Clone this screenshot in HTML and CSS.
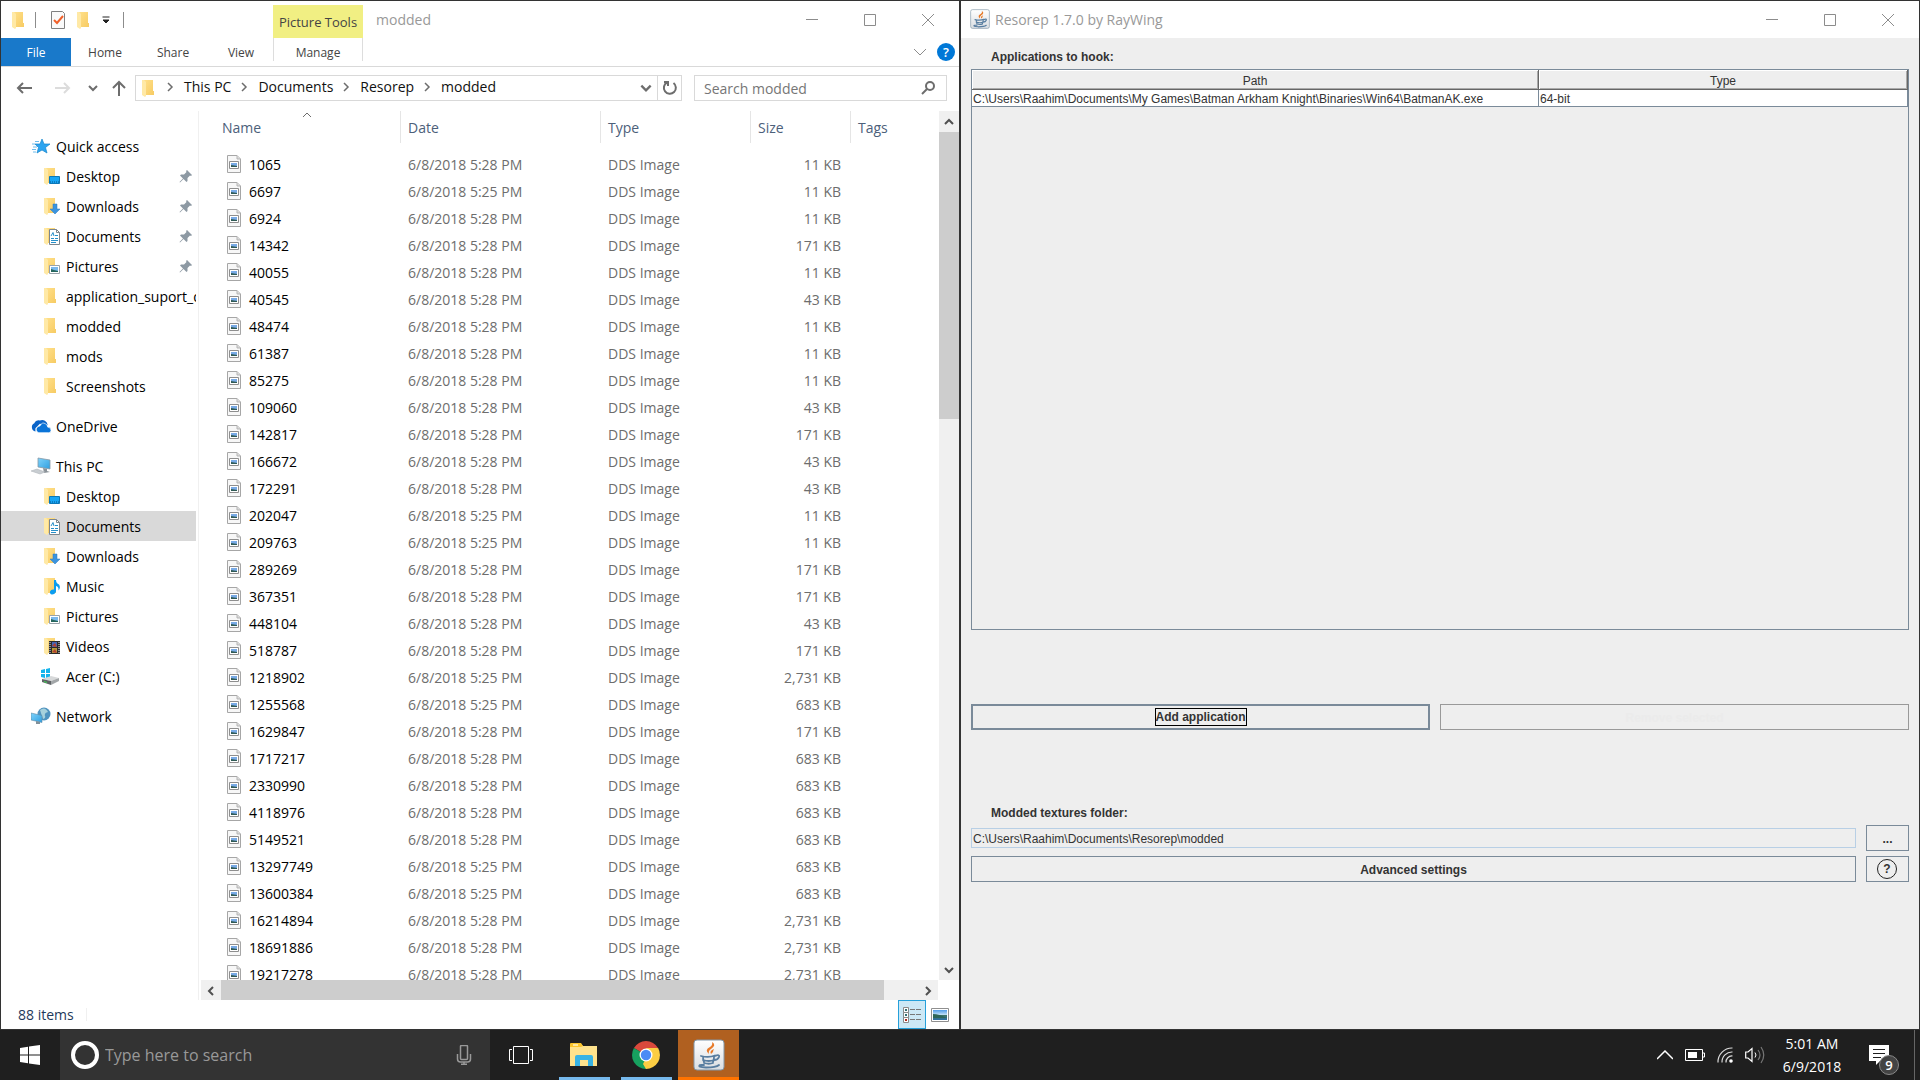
FILE: index.html
```html
<!DOCTYPE html>
<html lang="en">
<head>
  <meta charset="UTF-8" />
  <title>modded</title>
  <link rel="stylesheet" href="styles.css">
</head>
<body>
  <!-- Shared icon shapes -->
  <svg class="sprite" aria-hidden="true">
    <defs>
      <linearGradient id="gold" x1="0" x2="1" y1="0" y2="1">
        <stop offset="0" stop-color="#ffe08a" /><stop offset="1" stop-color="#f7cb63" />
      </linearGradient>
      <linearGradient id="screen" x1="0" x2="1" y1="0" y2="1">
        <stop offset="0" stop-color="#7fd3fb" /><stop offset="1" stop-color="#2f9fe0" />
      </linearGradient>
      <linearGradient id="tile" x1="0" x2="0" y1="0" y2="1">
        <stop offset="0" stop-color="#ffffff" /><stop offset="1" stop-color="#d9dde1" />
      </linearGradient>
      <linearGradient id="photo" x1="0" x2="0" y1="0" y2="1">
        <stop offset="0" stop-color="#4f9be8" /><stop offset=".5" stop-color="#c8e4f8" />
        <stop offset=".55" stop-color="#3f7468" /><stop offset="1" stop-color="#2e6fa8" />
      </linearGradient>
    </defs>
    <symbol id="folder" viewBox="0 0 16 18">
      <path d="M3 1h9v11h1v4H3z" fill="url(#gold)" />
      <path d="M1 1h2l2 2v14l-1 1-3-2z" fill="#ffe9a6" />
    </symbol>
    <symbol id="file" viewBox="0 0 14 18">
      <path d="M.5.5h9.500l3.500 3.500v13.500H.5z" fill="#f7f7f7" stroke="#a6a6a6" />
      <path d="M10 .5V4h3.500" fill="#dcdcdc" stroke="#b5b5b5" />
      <path d="M2.500 6.500h9v7h-9z" fill="#fff" stroke="#8e8e8e" />
      <path d="M4 8h6v4H4z" fill="#78aae6" /><path d="M4 10l3 .5 3 .5v1H4z" fill="#2f5a55" />
    </symbol>
    <symbol id="desktop" viewBox="0 0 18 18">
      <use href="#folder" width="16" height="18" />
      <path d="M6.500 9.500h10v7h-10z" fill="#16a5f5" stroke="#0c78b8" />
      <path d="M7 15h10" stroke="#075488" stroke-dasharray="1 1" />
    </symbol>
    <symbol id="downloads" viewBox="0 0 18 18">
      <use href="#folder" width="16" height="18" />
      <path d="M10 7h4v5h3l-5 5-5-5h3z" fill="#3b94de" stroke="#2b7bc0" stroke-width=".5" />
    </symbol>
    <symbol id="documents" viewBox="0 0 18 18">
      <use href="#folder" width="16" height="18" />
      <path d="M6.500 2.500h7l3 3v12h-10z" fill="#fff" stroke="#7d868c" />
      <path d="M13.500 2.500v3h3" fill="none" stroke="#7d868c" />
      <path d="M8 9l2-3.500L11 9M12 8.500h3M8 11.500h3M12 11.500h3M8 13.500h7M8 15.500h5" fill="none" stroke="#2790c9" />
    </symbol>
    <symbol id="pictures" viewBox="0 0 18 18">
      <use href="#folder" width="16" height="18" />
      <path d="M6.500 8.500h10v8h-10z" fill="#fff" stroke="#98a2a9" />
      <path d="M8 10h7v5H8z" fill="#79b8ed" /><path d="M8 12l3 1 4 1v1H8z" fill="#24665c" />
    </symbol>
    <symbol id="music" viewBox="0 0 18 18">
      <use href="#folder" width="16" height="18" />
      <path d="M11 3h2q0 3 3 4.500 2 3-.5 6 .5-4-2.500-4.500v5.500q-1 3-4 3-2.500-.5-2-3 1-2.500 4-2z" fill="#0b9df0" />
    </symbol>
    <symbol id="videos" viewBox="0 0 18 18">
      <use href="#folder" width="16" height="18" />
      <path d="M6 4h11v13H6z" fill="#2c2c2c" />
      <path d="M7 5v12M16 5v12" stroke="#eee" stroke-dasharray="1 1" />
      <path d="M9 5h5v5H9z" fill="#4666b4" /><path d="M9 11h5v5H9z" fill="#b79b39" />
      <path d="M9 9l3-3 2 4zM9 15l3-3 2 4z" fill="#b44030" />
    </symbol>
    <symbol id="quick" viewBox="0 0 18 18">
      <path d="M10 2l2 5h6l-4.500 3.500L15 16l-5-3-5 3 1.500-5.500L3 7h5z" fill="#2ba4f0" stroke="#1685cc" stroke-width=".7" />
      <path d="M3 4.500h4M0 7h3M1 10h4M0 12.500h4M1 15h3" stroke="#6dbcec" />
    </symbol>
    <symbol id="cloud" viewBox="0 0 18 14">
      <path d="M4 12a4 4 0 0 1-1-7.500A4 4 0 0 1 8 2a5 5 0 0 1 7 4l-7-1-4 4z" fill="#0a64c8" />
      <path d="M7 13q-3-1-2-4 1-2 3-2 2-4 5-2 2 1 2 3 3 0 3 3 0 2-2 2z" fill="#0a74d8" stroke="#fff" stroke-width=".6" />
    </symbol>
    <symbol id="pc" viewBox="0 0 20 18">
      <path d="M7 1l12 2v9L7 10z" fill="url(#screen)" stroke="#8698a4" stroke-width=".8" />
      <path d="M12 11l4 1v2l3 1-6 1z" fill="#8a9298" />
      <path d="M0 14l6-2 8 3-5 2z" fill="#c8cdd1" stroke="#a9afb4" stroke-width=".5" />
    </symbol>
    <symbol id="drive" viewBox="0 0 20 18">
      <path d="M1 3l4-1v4H1zM6 2l4-1v5H6zM1 7h4v4L1 10zM6 7h4v4H6z" fill="#14b4ec" />
      <path d="M2 12l9-3 8 2-8 3z" fill="#d7d9da" /><path d="M2 12l9 2v4l-9-3z" fill="#5f6366" />
      <path d="M11 14l8-3v3l-8 4z" fill="#a2a6a8" /><path d="M4 14.500l3 1" stroke="#39d850" />
    </symbol>
    <symbol id="network" viewBox="0 0 20 18">
      <circle cx="13" cy="7" r="6.500" fill="#4f93bf" /><path d="M9 3q5-4 8 2-4 1-3 4 1 2-2 3z" fill="#a6d1dc" />
      <path d="M0 6l11 2.500v7L0 13z" fill="url(#screen)" stroke="#608ca6" stroke-width=".6" />
      <path d="M5 14l4 1v2H5z" fill="#81909a" />
    </symbol>
    <symbol id="pin" viewBox="0 0 14 14">
      <path d="M8 1l5 5-1 1-1-.5L8.500 9v3l-1 1-3-3L1 13.500.5 13 4 9.500l-3-3 1-1h3L7.500 3 7 2z" fill="#8d99a3" />
    </symbol>
    <symbol id="java" viewBox="0 0 32 32">
      <rect x="1" y="1" width="30" height="30" rx="3" fill="url(#tile)" stroke="#8297a9" />
      <path d="M16 15q-5-4 1-7 3-2 2-5 5 3-1 7-3 2-2 5zM18 15q-2-3 3-5-1 2-1 3-1 1-2 2z" fill="#e77a2a" />
      <path d="M8 17q8 2 14-.5M22 17q5-2 4 1-1 3-5 3M10 21q6 2 11 0M10 18q0 3 1 5M21 18q0 3-1 5M11 24q5 1.500 9 0M7 26q-3 2 6 2.500 10 0 13-2.500M8 26h3" fill="none" stroke="#587da0" stroke-width="1.800" stroke-linecap="round" />
    </symbol>
    <symbol id="chevron" viewBox="0 0 12 12"><path d="M4 2l4 4-4 4" fill="none" stroke="currentColor" stroke-width="1.500" /></symbol>
    <symbol id="arrow-up" viewBox="0 0 12 12"><path d="M2 8l4-4 4 4" fill="none" stroke="currentColor" stroke-width="2" /></symbol>
    <symbol id="arrow-down" viewBox="0 0 12 12"><path d="M2 4l4 4 4-4" fill="none" stroke="currentColor" stroke-width="2" /></symbol>
    <symbol id="arrow-left" viewBox="0 0 12 12"><path d="M8 2L4 6l4 4" fill="none" stroke="currentColor" stroke-width="2" /></symbol>
    <symbol id="arrow-right" viewBox="0 0 12 12"><path d="M4 2l4 4-4 4" fill="none" stroke="currentColor" stroke-width="2" /></symbol>
    <symbol id="win-min" viewBox="0 0 12 12"><path d="M0 5.500h12" stroke="#8c8c8c" /></symbol>
    <symbol id="win-max" viewBox="0 0 12 12"><path d="M.5.5h11v11H.5z" fill="none" stroke="#8c8c8c" /></symbol>
    <symbol id="win-close" viewBox="0 0 12 12"><path d="M0 0l12 12M12 0L0 12" stroke="#8c8c8c" /></symbol>
  </svg>

  <main class="windows">
    <!-- File explorer -->
    <section class="window explorer">
      <header class="titlebar">
        <div class="quick-bar">
          <svg class="icon"><use href="#folder" /></svg>
          <span class="divider"></span>
          <button class="plain" aria-label="Properties">
            <svg width="16" height="18" viewBox="0 0 16 18">
              <path d="M1.500.5h11l2 2v15h-13z" fill="#fafafa" stroke="#808080" />
              <path d="M4 9l3 3 6-7" fill="none" stroke="#f0602a" stroke-width="2" />
            </svg>
          </button>
          <button class="plain" aria-label="New folder"><svg class="icon"><use href="#folder" /></svg></button>
          <button class="plain" aria-label="Customize">
            <svg width="8" height="8" viewBox="0 0 8 8"><path d="M.5 1h7M1 4h6L4 7z" fill="#222" stroke="#222" /></svg>
          </button>
          <span class="divider"></span>
        </div>
        <span class="context-tab">Picture Tools</span>
        <span class="caption">modded</span>
        <div class="controls">
          <button aria-label="Minimize"><svg><use href="#win-min" /></svg></button>
          <button aria-label="Maximize"><svg><use href="#win-max" /></svg></button>
          <button aria-label="Close"><svg><use href="#win-close" /></svg></button>
        </div>
      </header>

      <nav class="ribbon">
        <button class="tab file-tab">File</button>
        <button class="tab">Home</button>
        <button class="tab">Share</button>
        <button class="tab">View</button>
        <button class="tab manage-tab">Manage</button>
        <button class="plain expand" aria-label="Expand ribbon">
          <svg width="14" height="8" viewBox="0 0 14 8"><path d="M1 1l6 6 6-6" fill="none" stroke="#8c8c8c" /></svg>
        </button>
        <button class="plain help" aria-label="Help">?</button>
      </nav>

      <div class="address-row">
        <button class="plain" aria-label="Back"><svg width="16" height="14" viewBox="0 0 16 14"><path d="M16 7H2M7 2L2 7l5 5" fill="none" stroke="#6d6d6d" stroke-width="2" /></svg></button>
        <button class="plain forward" aria-label="Forward"><svg width="16" height="14" viewBox="0 0 16 14"><path d="M0 7h14M9 2l5 5-5 5" fill="none" stroke="#dcdcdc" stroke-width="2" /></svg></button>
        <button class="plain recent" aria-label="Recent locations"><svg width="12" height="12"><use href="#arrow-down" /></svg></button>
        <button class="plain" aria-label="Up"><svg width="14" height="16" viewBox="0 0 14 16"><path d="M7 16V2M1 8l6-6 6 6" fill="none" stroke="#6d6d6d" stroke-width="2" /></svg></button>
        <div class="address">
          <svg class="icon"><use href="#folder" /></svg>
          <svg class="sep"><use href="#chevron" /></svg><a href="#">This PC</a>
          <svg class="sep"><use href="#chevron" /></svg><a href="#">Documents</a>
          <svg class="sep"><use href="#chevron" /></svg><a href="#">Resorep</a>
          <svg class="sep"><use href="#chevron" /></svg><a href="#">modded</a>
          <button class="plain drop" aria-label="Previous locations"><svg width="14" height="14"><use href="#arrow-down" /></svg></button>
          <button class="plain refresh" aria-label="Refresh">
            <svg width="16" height="16" viewBox="0 0 16 16"><path d="M5 2.500A6 6 0 1 0 11.500 3M2 2h4v4" fill="none" stroke="#6d6d6d" stroke-width="2" /></svg>
          </button>
        </div>
        <label class="search">
          <input type="text" placeholder="Search modded" aria-label="Search modded">
          <svg width="14" height="14" viewBox="0 0 14 14"><circle cx="9" cy="5" r="4" fill="none" stroke="#6d6d6d" stroke-width="2" /><path d="M6 8l-5 5" stroke="#6d6d6d" stroke-width="2" /></svg>
        </label>
      </div>

      <div class="content">
        <aside class="sidebar" id="sidebar"></aside>
        <div class="list-area">
          <div class="list-main">
            <div class="list">
              <table class="files">
                <colgroup><col class="c-name"><col class="c-date"><col class="c-type"><col class="c-size"><col></colgroup>
                <thead>
                  <tr>
                    <th>Name<svg class="sort" width="10" height="6" viewBox="0 0 10 6"><path d="M1 5l4-4 4 4" fill="none" stroke="#6d6d6d" /></svg></th>
                    <th>Date</th><th>Type</th><th>Size</th><th>Tags</th>
                  </tr>
                </thead>
                <tbody id="rows"></tbody>
              </table>
            </div>
            <div class="vscroll">
              <button aria-label="Scroll up"><svg><use href="#arrow-up" /></svg></button>
              <span class="thumb"></span>
              <button aria-label="Scroll down"><svg><use href="#arrow-down" /></svg></button>
            </div>
          </div>
          <div class="hscroll">
            <button aria-label="Scroll left"><svg><use href="#arrow-left" /></svg></button>
            <span class="thumb"></span>
            <button aria-label="Scroll right"><svg><use href="#arrow-right" /></svg></button>
          </div>
        </div>
      </div>

      <footer class="status">
        <span>88 items</span><i></i>
        <button class="view-btn active" aria-label="Details view">
          <svg width="18" height="16" viewBox="0 0 18 16">
            <path d="M.5.5h5v5h-5zM.5 5.500h5v5h-5zM.5 10.500h5v5h-5z" fill="#fff" stroke="#8a8a8a" />
            <path d="M2 3h2M2 8h2" stroke="#356f75" stroke-width="2" /><path d="M2 13h2" stroke="#b02a20" stroke-width="2" />
            <path d="M7 2.500h5M13 2.500h5M7 7.500h5M13 7.500h5M7 12.500h5M13 12.500h5" stroke="#777" />
          </svg>
        </button>
        <button class="view-btn" aria-label="Large icons view">
          <svg width="18" height="14" viewBox="0 0 18 14"><path d="M.5.5h17v13H.5z" fill="#fff" stroke="#8f8f8f" /><path d="M2 2h14v10H2z" fill="url(#photo)" /><path d="M2 6q6 0 14 4H2z" fill="#2f6659" /></svg>
        </button>
      </footer>
    </section>

    <!-- Resorep -->
    <section class="window resorep">
      <header class="titlebar">
        <svg class="app-icon" width="20" height="20"><use href="#java" /></svg>
        <span class="caption">Resorep 1.7.0 by RayWing</span>
        <div class="controls">
          <button aria-label="Minimize"><svg><use href="#win-min" /></svg></button>
          <button aria-label="Maximize"><svg><use href="#win-max" /></svg></button>
          <button aria-label="Close"><svg><use href="#win-close" /></svg></button>
        </div>
      </header>
      <div class="panel">
        <h2>Applications to hook:</h2>
        <div class="apps">
          <table>
            <colgroup><col class="c-path"><col></colgroup>
            <thead><tr><th>Path</th><th>Type</th></tr></thead>
            <tbody>
              <tr><td>C:\Users\Raahim\Documents\My Games\Batman Arkham Knight\Binaries\Win64\BatmanAK.exe</td><td>64-bit</td></tr>
            </tbody>
          </table>
        </div>
        <div class="actions">
          <button class="btn focused"><span>Add application</span></button>
          <button class="btn" disabled>Remove selected</button>
        </div>
        <label class="folder-label" for="folder-path">Modded textures folder:</label>
        <div class="folder-grid">
          <input id="folder-path" type="text" value="C:\Users\Raahim\Documents\Resorep\modded" readonly>
          <button class="btn">...</button>
          <button class="btn">Advanced settings</button>
          <button class="btn" aria-label="About"><span class="round">?</span></button>
        </div>
      </div>
    </section>
  </main>

  <footer class="taskbar">
    <button class="start" aria-label="Start">
      <svg width="20" height="20" viewBox="0 0 20 20"><path d="M0 3l8-1.200V9.500H0zM9 1.600L20 0v9.500H9zM0 10.500h8v7.700L0 17zM9 10.500h11V20L9 18.400z" fill="#fff" /></svg>
    </button>
    <label class="cortana">
      <span class="ring"></span>
      <input type="text" placeholder="Type here to search" aria-label="Type here to search">
      <svg width="16" height="20" viewBox="0 0 16 20"><rect x="4.500" y=".5" width="7" height="14" rx="1" fill="none" stroke="#999" stroke-width="1.500" /><path d="M1.500 9v5q0 3 3 3h7q3 0 3-3V9M8 17v2.500M5 19.300h6" fill="none" stroke="#999" stroke-width="1.500" /></svg>
    </label>
    <button class="task view" aria-label="Task view">
      <svg width="24" height="18" viewBox="0 0 24 18"><path d="M4.500.5h15v17h-15zM3 3.500H.5v11H3M21 3.500h2.500v11H21" fill="none" stroke="#fff" /></svg>
    </button>
    <button class="task open" aria-label="File Explorer">
      <svg width="28" height="24" viewBox="0 0 28 24"><path d="M0 1h11l2 2h14v20H0z" fill="#fee28c" /><path d="M0 1q0-1 1-1h10l2 3-2 1H0z" fill="#fbc52c" /><path d="M3 2h5" stroke="#fff2c5" stroke-width="1.500" /><path d="M5 23V14q0-2 2-2h14q2 0 2 2v9h-5v-6h-8v6z" fill="#38b3e4" /></svg>
    </button>
    <button class="task open" aria-label="Chrome">
      <svg width="28" height="28" viewBox="0 0 28 28">
        <path d="M14 14L1.900 7A14 14 0 0 1 26.100 7z" fill="#d9493c" />
        <path d="M14 14L26.100 7A14 14 0 0 1 14 28z" fill="#fccd43" />
        <path d="M14 14v14A14 14 0 0 1 1.900 7z" fill="#17a15f" />
        <path d="M14 7h12.100L20 17.500z" fill="#fccd43" /><path d="M20 17.500L14 28l-3-5 3-6z" fill="#fccd43" />
        <circle cx="14" cy="14" r="6.500" fill="#fff" /><circle cx="14" cy="14" r="5.200" fill="#4c8bf5" />
      </svg>
    </button>
    <button class="task current" aria-label="Resorep"><svg width="32" height="32"><use href="#java" /></svg></button>
    <div class="tray">
      <svg width="16" height="10" viewBox="0 0 16 10"><path d="M0 9l8-8 8 8" fill="none" stroke="#fff" stroke-width="1.500" /></svg>
      <svg width="20" height="12" viewBox="0 0 20 12"><path d="M.5.5h17v11H.5zM18 4h1.500v4H18" fill="none" stroke="#fff" /><path d="M3 3h9v6H3z" fill="#fff" /></svg>
      <svg width="16" height="16" viewBox="0 0 16 16"><circle cx="14" cy="14" r="1.800" fill="#fff" /><path d="M9 15.500A6 6 0 0 1 15.500 9M5 15.500A10 10 0 0 1 15.500 5M1 15.500A14 14 0 0 1 15.500 1" fill="none" stroke="#ddd" stroke-width="1.200" /></svg>
      <svg width="20" height="18" viewBox="0 0 20 18"><path d="M.7 6v6H3l4 3.500v-13L3 6z" fill="none" stroke="#fff" stroke-width="1.200" /><path d="M10 6.500q2 2.500 0 5" fill="none" stroke="#fff" /><path d="M13 4q4 5 0 10M16 1q5.500 8 0 16" fill="none" stroke="#777" stroke-width="1.200" /></svg>
      <div class="clock"><span>5:01 AM</span><span>6/9/2018</span></div>
      <button class="notify" aria-label="Notifications">
        <svg width="20" height="20" viewBox="0 0 20 20"><path d="M0 0h20v16h-9l-4 4v-4H0z" fill="#fff" /><path d="M4 4.500h12M4 8.500h12M4 12.500h8" stroke="#1f1f1f" /></svg>
        <span class="badge">9</span>
      </button>
    </div>
    <span class="peek"></span>
  </footer>

  <script>
    // [name, minute, size in KB]
    const files = [
      ['1065', 28, '11'], ['6697', 25, '11'], ['6924', 28, '11'], ['14342', 28, '171'],
      ['40055', 28, '11'], ['40545', 28, '43'], ['48474', 28, '11'], ['61387', 28, '11'],
      ['85275', 28, '11'], ['109060', 28, '43'], ['142817', 28, '171'], ['166672', 28, '43'],
      ['172291', 28, '43'], ['202047', 25, '11'], ['209763', 25, '11'], ['289269', 28, '171'],
      ['367351', 28, '171'], ['448104', 28, '43'], ['518787', 28, '171'], ['1218902', 25, '2,731'],
      ['1255568', 25, '683'], ['1629847', 28, '171'], ['1717217', 28, '683'], ['2330990', 28, '683'],
      ['4118976', 28, '683'], ['5149521', 28, '683'], ['13297749', 25, '683'], ['13600384', 25, '683'],
      ['16214894', 28, '2,731'], ['18691886', 28, '2,731'], ['19217278', 28, '2,731']
    ];

    document.getElementById('rows').innerHTML = files.map(([name, minute, size]) => `
      <tr>
        <td class="name"><svg class="file-icon"><use href="#file" /></svg>${name}</td>
        <td>6/8/2018 5:${minute} PM</td>
        <td>DDS Image</td>
        <td class="size">${size} KB</td>
        <td></td>
      </tr>`).join('');

    // Each group starts with its root entry: [label, icon, extra class]
    const groups = [
      [['Quick access', 'quick', 'root'], ['Desktop', 'desktop', 'pinned'], ['Downloads', 'downloads', 'pinned'],
       ['Documents', 'documents', 'pinned'], ['Pictures', 'pictures', 'pinned'],
       ['application_suport_d', 'folder', 'plain-folder'], ['modded', 'folder', 'plain-folder'],
       ['mods', 'folder', 'plain-folder'], ['Screenshots', 'folder', 'plain-folder']],
      [['OneDrive', 'cloud', 'root']],
      [['This PC', 'pc', 'root'], ['Desktop', 'desktop', ''], ['Documents', 'documents', 'selected'],
       ['Downloads', 'downloads', ''], ['Music', 'music', ''], ['Pictures', 'pictures', ''],
       ['Videos', 'videos', ''], ['Acer (C:)', 'drive', 'wide']],
      [['Network', 'network', 'root']]
    ];

    document.getElementById('sidebar').innerHTML = groups.map(items => `<ul>${items.map(([label, icon, cls]) => `
      <li><a href="#" class="${cls}">
        <svg class="side-icon"><use href="#${icon}" /></svg><span>${label}</span>
        ${cls === 'pinned' ? '<svg class="pin"><use href="#pin" /></svg>' : ''}
      </a></li>`).join('')}</ul>`).join('');
  </script>
</body>
</html>
```

FILE: styles.css
```css
* {
  margin: 0;
  padding: 0;
  box-sizing: border-box;
}

body {
  height: 100vh;
  display: flex;
  flex-direction: column;
  font-family: "Open Sans", "Noto Sans", sans-serif;
  font-size: 14px;
  color: #000;
  background: #1f1f1f;
  overflow: hidden;
}

button, input {
  font: inherit;
  color: inherit;
  background: none;
  border: 0;
  outline: none;
}

a {
  color: inherit;
  text-decoration: none;
}

svg {
  display: block;
  flex: none;
}

.sprite {
  position: absolute;
  width: 0;
  height: 0;
}

.plain {
  display: flex;
  align-items: center;
  justify-content: center;
}

.icon {
  width: 16px;
  height: 18px;
}

/* Windows */
.windows {
  flex: 1;
  min-height: 0;
  display: grid;
  grid-template-columns: 1fr 1fr;
}

.window {
  min-width: 0;
  min-height: 0;
  display: flex;
  flex-direction: column;
  background: #fff;
  border: 1px solid #333;
}

.titlebar {
  height: 37px;
  flex: none;
  display: flex;
  align-items: center;
}

.caption {
  color: #999;
  font-size: 14px;
  line-height: 36px;
}

.controls {
  display: flex;
  margin: 0 2px 0 auto;
}

.controls button {
  width: 58px;
  height: 36px;
  display: flex;
  align-items: center;
  justify-content: center;
}

.controls svg {
  width: 12px;
  height: 12px;
}

.quick-bar {
  width: 272px;
  padding-left: 10px;
  display: flex;
  align-items: center;
}

.quick-bar .divider {
  width: 1px;
  height: 16px;
  margin: 0 14px 0 8px;
  background: #8c8c8c;
}

.quick-bar .plain {
  margin-right: 10px;
}

.quick-bar .plain + .divider {
  margin-left: 3px;
}

.context-tab {
  width: 90px;
  align-self: flex-end;
  margin-right: 13px;
  background: #f1ef83;
  color: #444;
  font-size: 13px;
  line-height: 34px;
  height: 33px;
  text-align: center;
}

/* Ribbon tabs */
.ribbon {
  height: 29px;
  flex: none;
  display: flex;
  align-items: flex-start;
  border-bottom: 1px solid #d9d9d9;
}

.tab {
  width: 68px;
  height: 28px;
  font-size: 12px;
  color: #444;
}

.file-tab {
  width: 70px;
  background: #1979ca;
  color: #fff;
}

.manage-tab {
  width: 90px;
  height: 23px;
  padding-top: 5px;
  margin-left: -2px;
  border: solid #ddd;
  border-width: 0 1px;
}

.expand {
  height: 28px;
  margin: 0 10px 0 auto;
}

.help {
  width: 18px;
  height: 18px;
  margin: 5px 4px 0 0;
  border-radius: 50%;
  background: #0078d7;
  color: #fff;
  font-size: 13px;
  font-weight: 600;
}

/* Address bar */
.address-row {
  flex: none;
  display: flex;
  align-items: center;
  padding: 8px 12px 10px 15px;
  color: #6d6d6d;
}

.forward {
  margin-left: 23px;
}

.recent {
  margin: 0 13px 0 16px;
}

.address {
  flex: 1;
  height: 26px;
  margin-left: 9px;
  padding-left: 5px;
  display: flex;
  align-items: center;
  border: 1px solid #d9d9d9;
}

.address a {
  color: #111;
  line-height: 22px;
  padding-bottom: 2px;
}

.address .sep {
  width: 12px;
  height: 12px;
  margin: 0 8px 2px 7px;
}

.drop {
  margin: 0 4px 0 auto;
}

.refresh {
  width: 24px;
  height: 24px;
  border-left: 1px solid #d9d9d9;
}

.search {
  width: 253px;
  height: 26px;
  margin-left: 12px;
  padding: 0 11px 0 9px;
  display: flex;
  align-items: center;
  border: 1px solid #d9d9d9;
}

.search input {
  flex: 1;
  min-width: 0;
}

.search input::placeholder {
  color: #767676;
}

/* Navigation tree */
.content {
  flex: 1;
  min-height: 0;
  display: flex;
}

.sidebar {
  width: 198px;
  flex: none;
  padding: 20px 2px 0 0;
  border-right: 1px solid #f0f0f0;
  overflow: hidden;
}

.sidebar ul {
  list-style: none;
  margin-bottom: 10px;
}

.sidebar li a {
  height: 30px;
  padding-left: 42px;
  display: flex;
  align-items: center;
  overflow: hidden;
  white-space: nowrap;
}

.sidebar li a.root {
  padding-left: 30px;
}

.sidebar li a.wide {
  padding-left: 39px;
}

.sidebar li a.selected {
  background: #d9d9d9;
}

.side-icon {
  width: 18px;
  height: 18px;
  margin-right: 5px;
}

.plain-folder .side-icon {
  width: 16px;
  margin-right: 7px;
}

.root .side-icon {
  width: 20px;
  margin-right: 5px;
}

.wide .side-icon {
  width: 20px;
  margin-right: 6px;
}

.pin {
  width: 14px;
  height: 14px;
  margin: 0 3px 0 auto;
}

/* File list */
.list-area {
  flex: 1;
  min-width: 0;
  display: flex;
  flex-direction: column;
  padding-left: 2px;
}

.list-main {
  flex: 1;
  min-height: 0;
  display: flex;
}

.list {
  flex: 1;
  min-width: 0;
  overflow: hidden;
}

.files {
  width: 100%;
  table-layout: fixed;
  border-collapse: separate;
  border-spacing: 0;
}

.c-name, .c-date {
  width: 200px;
}

.c-type {
  width: 150px;
}

.c-size {
  width: 100px;
}

.files th {
  position: relative;
  height: 32px;
  padding-left: 7px;
  border-right: 1px solid #e5e5e5;
  font-weight: 400;
  text-align: left;
  color: #4c607a;
}

.files th:first-child {
  padding-left: 21px;
}

.files th:last-child {
  border-right: 0;
}

/* Sort arrow hangs over the top edge of the header cell */
.sort {
  position: absolute;
  top: 1px;
  left: 101px;
}

.files tbody::before {
  content: "";
  display: block;
  height: 8px;
}

.files td {
  height: 27px;
  padding-left: 7px;
  color: #6d6d6d;
  white-space: nowrap;
}

.files td.name {
  display: flex;
  align-items: center;
  padding-left: 26px;
  color: #000;
}

.files td.size {
  padding-right: 10px;
  text-align: right;
}

.file-icon {
  width: 14px;
  height: 18px;
  margin: 0 8px 1px 0;
}

/* Scroll bars */
.vscroll, .hscroll {
  flex: none;
  display: flex;
  background: #f0f0f0;
  color: #505050;
}

.vscroll {
  width: 20px;
  flex-direction: column;
}

.vscroll .thumb {
  flex: 0 0 33%;
  margin-bottom: auto;
}

.hscroll {
  height: 20px;
  margin-right: 21px;
}

.hscroll .thumb {
  flex: 0 0 90%;
  margin-right: auto;
}

.thumb {
  background: #cdcdcd;
}

.vscroll button, .hscroll button {
  width: 20px;
  height: 21px;
  display: flex;
  align-items: center;
  justify-content: center;
}

.vscroll svg, .hscroll svg {
  width: 12px;
  height: 12px;
}

/* Status bar */
.status {
  height: 29px;
  flex: none;
  display: flex;
  align-items: center;
  padding: 0 5px 0 17px;
  color: #1e395b;
}

.status i {
  width: 1px;
  height: 13px;
  margin: 0 auto 0 12px;
  background: #f0f0f0;
}

.view-btn {
  width: 28px;
  height: 29px;
  display: flex;
  align-items: center;
  justify-content: center;
}

.view-btn.active {
  background: #cce8f6;
  border: 1px solid #26a0da;
}

/* Resorep */
.resorep {
  background: #eee;
  font-family: "Liberation Sans", Arial, sans-serif;
  font-size: 12px;
  color: #333;
}

.resorep .titlebar {
  background: #fff;
  font-family: "Open Sans", "Noto Sans", sans-serif;
}

.app-icon {
  margin: 0 5px 2px 9px;
}

.panel {
  flex: 1;
  min-height: 0;
  display: flex;
  flex-direction: column;
  padding: 11px 10px 147px;
}

.panel h2, .folder-label {
  margin-left: 20px;
  font-size: 12px;
  font-weight: 700;
  line-height: 16px;
}

.apps {
  flex: 1;
  min-height: 0;
  margin-top: 4px;
  border: 1px solid #7a8a99;
}

.apps table {
  width: 100%;
  table-layout: fixed;
  border-collapse: separate;
  border-spacing: 0;
}

.c-path {
  width: 567px;
}

.apps th {
  height: 20px;
  padding-top: 2px;
  font-weight: 400;
  border: solid #666;
  border-width: 0 1px 1px 0;
  box-shadow: inset 1px 1px #fff, inset -1px -1px #aaa;
}

.apps td {
  height: 17px;
  padding: 2px 0 0 1px;
  background: #fff;
  border: solid #7a8a99;
  border-width: 0 1px 1px 0;
  white-space: nowrap;
}

.actions {
  display: grid;
  grid-template-columns: 459fr 469fr;
  gap: 10px;
  margin: 74px 0 75px;
}

.btn {
  height: 26px;
  padding-top: 2px;
  border: 1px solid #7a8a99;
  font-weight: 700;
  display: flex;
  align-items: center;
  justify-content: center;
}

.btn.focused {
  padding: 0;
  border-width: 2px;
}

.btn.focused span {
  border: 1px solid #000;
  padding-top: 1px;
  line-height: 15px;
}

.btn:disabled {
  border-color: #999;
  color: #ebebeb;
}

.folder-grid {
  display: grid;
  grid-template-columns: 1fr 43px;
  gap: 5px 10px;
  align-items: center;
  margin-top: 4px;
}

.folder-grid input {
  height: 20px;
  min-width: 0;
  padding: 2px 0 0 1px;
  border: 1px solid #b8cfe5;
}

.round {
  width: 20px;
  height: 20px;
  margin: 0 1px 2px 0;
  border: 1px solid #222;
  border-radius: 50%;
  line-height: 18px;
  text-align: center;
}

/* Taskbar */
.taskbar {
  height: 50px;
  flex: none;
  display: flex;
  color: #fff;
}

.start {
  width: 60px;
  display: flex;
  align-items: center;
  justify-content: center;
}

.cortana {
  width: 430px;
  padding: 0 18px 0 11px;
  display: flex;
  align-items: center;
  background: #333;
}

.ring {
  width: 28px;
  height: 28px;
  margin-right: 6px;
  border: 4px solid #fff;
  border-radius: 50%;
}

.cortana input {
  flex: 1;
  min-width: 0;
  font-size: 16px;
}

.cortana input::placeholder {
  color: #999;
}

.task {
  width: 62px;
  display: flex;
  align-items: center;
  justify-content: center;
}

.task.view {
  width: 61px;
  margin-right: 2px;
}

.task.open {
  background: linear-gradient(#76b9ed, #76b9ed) center bottom / 51px 3px no-repeat;
}

.task.current {
  width: 61px;
  margin-left: 1px;
  padding-top: 3px;
  background: #b06020;
  border-bottom: 3px solid #ff7300;
}

.tray {
  margin-left: auto;
  display: flex;
  align-items: center;
  gap: 12px;
}

.clock {
  width: 68px;
  margin-left: 1px;
  display: flex;
  flex-direction: column;
  text-align: center;
  line-height: 23px;
}

.notify {
  position: relative;
  width: 32px;
  margin: 0 13px 0 11px;
}

.badge {
  position: absolute;
  left: 10px;
  top: 10px;
  width: 20px;
  height: 20px;
  border: 1px solid #888;
  border-radius: 50%;
  background: #444;
  font-size: 13px;
  font-weight: 600;
  line-height: 18px;
  text-align: center;
}

.peek {
  width: 6px;
  border-left: 1px solid #666;
}
```
